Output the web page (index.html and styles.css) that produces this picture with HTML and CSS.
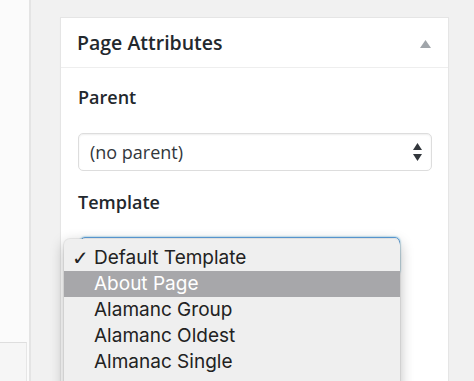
FILE: index.html
```html
<!doctype html>
<html lang="en">
  <head>
    <meta charset="UTF-8" />
    <meta name="viewport" content="width=device-width, initial-scale=1.0" />
    <title>Page Attributes</title>
    <link rel="stylesheet" href="styles.css">
  </head>
  <body>
    <div class="screen">
      <div class="sidebar">
        <div class="sidebar-box"></div>
      </div>
      <div class="main">
        <div class="postbox">
          <div class="postbox-header">
            <h2 class="postbox-title">Page Attributes</h2>
            <svg class="toggle" width="11" height="8" viewBox="0 0 11 8"><polygon points="5.5,0 11,8 0,8" fill="#a0a5aa"/></svg>
          </div>
          <div class="postbox-inside">
            <p class="field-label">Parent</p>
            <div class="select">
              <span>(no parent)</span>
              <svg class="select-arrows" width="9" height="18" viewBox="0 0 9 18"><polygon points="4.5,0 9,7 0,7" fill="#32373c"/><polygon points="0,11 9,11 4.5,18" fill="#32373c"/></svg>
            </div>
            <p class="field-label">Template</p>
            <div class="select select-open">
              <!-- native popup menu drawn over the select -->
              <ul class="popup">
                <li class="popup-item"><span class="check">✓</span>Default Template</li>
                <li class="popup-item is-hover">About Page</li>
                <li class="popup-item">Alamanc Group</li>
                <li class="popup-item">Alamanc Oldest</li>
                <li class="popup-item">Almanac Single</li>
                <li class="popup-item"></li>
              </ul>
            </div>
          </div>
        </div>
      </div>
    </div>
  </body>
</html>
```
FILE: styles.css
```css
html,
body {
  margin: 0;
  height: 100%;
  overflow: hidden;
}
body {
  background: #f1f1f1;
  font-family: "Open Sans", "Noto Sans", sans-serif;
  color: #23282d;
}
.screen {
  display: flex;
  height: 100%;
}
.sidebar {
  width: 29px;
  flex: none;
  background: #fbfbfb;
  border-right: 2px solid #e4e4e4;
  display: flex;
  flex-direction: column;
  justify-content: flex-end;
}
.sidebar-box {
  height: 38px;
  background: #f6f6f6;
  border-top: 1px solid #dedede;
  border-right: 1px solid #e6e6e6;
  margin-right: 2px;
}
.main {
  flex: 1;
  padding: 17px 0 0 29px;
}
.postbox {
  width: 387px;
  height: 400px;
  background: #fff;
  border: 1px solid #e5e5e5;
  box-shadow: 0 1px 1px rgba(0, 0, 0, 0.04);
}
.postbox-header {
  height: 49px;
  border-bottom: 1px solid #eee;
  display: flex;
  align-items: center;
  justify-content: space-between;
  padding: 0 17px 0 16px;
}
.postbox-title {
  margin: 0;
  font-size: 19.5px;
  font-weight: 600;
  line-height: 1.4;
}
.toggle {
  display: block;
  margin-top: 2px;
}
.postbox-inside {
  padding: 17px 16px 0 17px;
}
.field-label {
  margin: 0;
  font-size: 18px;
  font-weight: 600;
  line-height: 25px;
}
.select {
  margin: 23px 0 19px;
  height: 36px;
  border: 1px solid #ddd;
  border-radius: 5px;
  box-shadow: inset 0 1px 2px rgba(0, 0, 0, 0.07);
  display: flex;
  align-items: center;
  justify-content: space-between;
  padding: 0 9px 0 11px;
  font-size: 18px;
  color: #32373c;
}
.select-arrows {
  display: block;
}
.select-open {
  position: relative;
  margin: 22px 32px 0 2px;
  border-color: #5b9dd9;
  box-shadow: 0 0 2px rgba(30, 140, 190, 0.8);
}
.popup {
  position: absolute;
  top: 1px;
  left: -17px;
  width: 336px;
  margin: 0;
  padding: 6px 0 0;
  list-style: none;
  background: #efefef;
  border-radius: 6px 6px 0 0;
  box-shadow: 0 4px 14px rgba(0, 0, 0, 0.28), 0 0 0 1px rgba(0, 0, 0, 0.06);
  font-family: "Inter", "Liberation Sans", sans-serif;
  font-size: 19px;
  color: #222;
}
.popup-item {
  height: 26px;
  line-height: 26px;
  padding-left: 30px;
  position: relative;
}
.popup-item.is-hover {
  background: #a7a7aa;
  color: #fff;
}
.check {
  position: absolute;
  left: 8px;
  font-family: "DejaVu Sans", sans-serif;
  font-size: 20px;
  font-weight: bold;
}
```
